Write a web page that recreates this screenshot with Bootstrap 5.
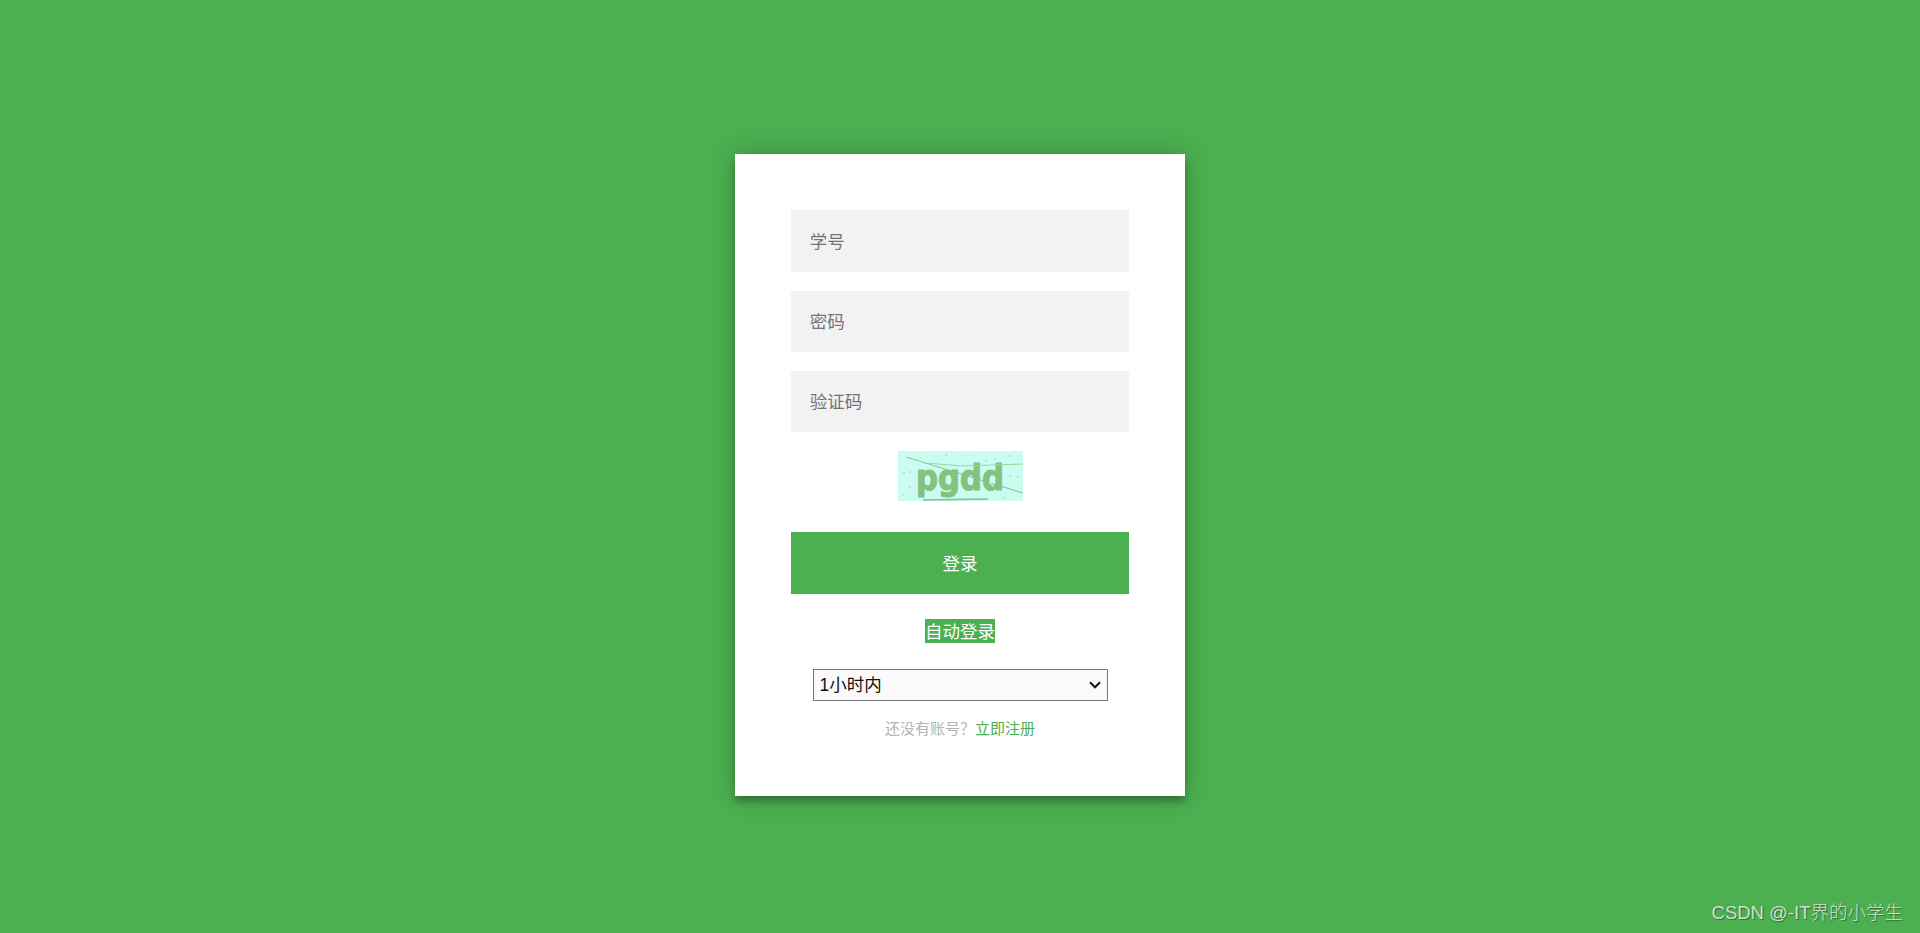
<!DOCTYPE html>
<html lang="zh-CN">
<head>
<meta charset="utf-8">
<title>登录</title>
<link href="https://cdn.jsdelivr.net/npm/bootstrap@5.3.0/dist/css/bootstrap.min.css" rel="stylesheet">
<style>
html, body { height: 100%; }
body {
  background: #4CAF50;
  font-family: "Liberation Sans", "Noto Sans CJK SC", sans-serif;
  overflow: hidden;
  padding-top: 154px;
}
.login-box {
  width: 450px;
  height: 642px;
  padding: 56.25px 56px;
  border: 0;
  border-radius: 0;
  background: #fff;
  box-shadow: 0 0 25px 0 rgba(0,0,0,.2), 0 6px 6px 0 rgba(0,0,0,.24);
}
.login-field.form-control {
  height: 61.5px;
  margin-bottom: 18.75px;
  padding: 2px 18.75px 0;
  border: 0;
  border-radius: 0;
  background: #f2f2f2;
  font-size: 17.5px;
}
.login-field::placeholder { color: #757575; opacity: 1; }
.captcha-art { display: block; width: 125px; height: 50px; margin: 0 auto 31px; }
.captcha-word { font-family: "DejaVu Sans", sans-serif; font-weight: 700; font-size: 35px; fill: #84c27f; stroke: #84c27f; stroke-width: 1.2; stroke-linejoin: round; }
.login-btn.btn {
  height: 62px;
  padding-top: 9px;
  border: 0;
  border-radius: 0;
  background: #4CAF50;
  color: #fff;
  font-size: 17.5px;
}
.auto-row { margin-top: 25px; height: 24px; font-size: 17.5px; line-height: 26px; text-align: center; }
.auto-label { display: inline-block; height: 24px; overflow: hidden; background: #4CAF50; color: #fff; vertical-align: top; }
.time-select.form-select {
  display: block;
  width: 295px;
  height: 32px;
  margin: 26px auto 0;
  padding: 0 24px 0 6px;
  border: 1px solid #767676;
  border-radius: 0;
  background-color: #fafafa;
  background-image: url("data:image/svg+xml,%3Csvg xmlns='http://www.w3.org/2000/svg' viewBox='0 0 12 8'%3E%3Cpath d='M1 1.3l5 5 5-5' fill='none' stroke='%23111' stroke-width='2'/%3E%3C/svg%3E");
  background-position: right 6px center;
  background-size: 12px 8px;
  color: #111;
  font-size: 17.5px;
  line-height: 30px;
}
.hint-line { margin-top: 17px; font-size: 15px; line-height: 22px; color: #b3b3b3; text-align: center; }
.hint-line a { color: #4CAF50; text-decoration: none; }
.mark-text {
  position: absolute;
  right: 17px;
  bottom: 8px;
  font-size: 18.5px;
  line-height: 24px;
  color: #cfe0cf;
  font-weight: 300;
  text-shadow: 1px 1px 1px rgba(0,0,0,.4);
}
</style>
</head>
<body>
<main class="card login-box mx-auto">
  <form class="d-block">
    <input class="form-control login-field" type="text" placeholder="学号">
    <input class="form-control login-field" type="password" placeholder="密码">
    <input class="form-control login-field" type="text" placeholder="验证码">
    <svg class="captcha-art" viewBox="0 0 125 50" role="img" aria-label="验证码图片">
      <rect width="125" height="50" fill="#cbfcf2"/>
      <text class="captcha-word" x="18" y="39" textLength="88" lengthAdjust="spacingAndGlyphs">pgdd</text>
      <path d="M8 6 L125 42" stroke="#84c27f" stroke-width="1" fill="none"/>
      <path d="M30 12 L62 15 L125 13" stroke="#9ed3a2" stroke-width="1" fill="none"/>
      <path d="M25 49 L90 48" stroke="#84c27f" stroke-width="1.6" fill="none"/>
      <g fill="#84c27f">
        <circle cx="6" cy="22" r=".7"/><circle cx="12" cy="21" r=".7"/><circle cx="22" cy="7" r=".6"/><circle cx="38" cy="5" r=".6"/>
        <circle cx="88" cy="10" r=".7"/><circle cx="97" cy="8" r=".7"/><circle cx="112" cy="5" r=".7"/><circle cx="120" cy="26" r=".7"/>
        <circle cx="112" cy="25" r=".7"/><circle cx="12" cy="36" r=".7"/><circle cx="106" cy="47" r=".7"/>
        <circle cx="48" cy="4" r=".7"/><circle cx="5" cy="44" r=".6"/><circle cx="116" cy="14" r=".6"/><circle cx="70" cy="4" r=".6"/>
      </g>
      <g fill="#cbfcf2">
        <circle cx="92" cy="32" r="1"/><circle cx="95" cy="35" r=".8"/>
      </g>
    </svg>
    <button class="btn login-btn w-100" type="button">登录</button>
    <div class="auto-row"><label class="auto-label">自动登录</label></div>
    <select class="form-select time-select"><option>1小时内</option><option>1天内</option><option>7天内</option></select>
    <p class="hint-line mb-0">还没有账号？<a href="#">立即注册</a></p>
  </form>
</main>
<div class="mark-text">CSDN @-IT界的小学生</div>
<script src="https://cdn.jsdelivr.net/npm/bootstrap@5.3.0/dist/js/bootstrap.bundle.min.js"></script>
</body>
</html>
